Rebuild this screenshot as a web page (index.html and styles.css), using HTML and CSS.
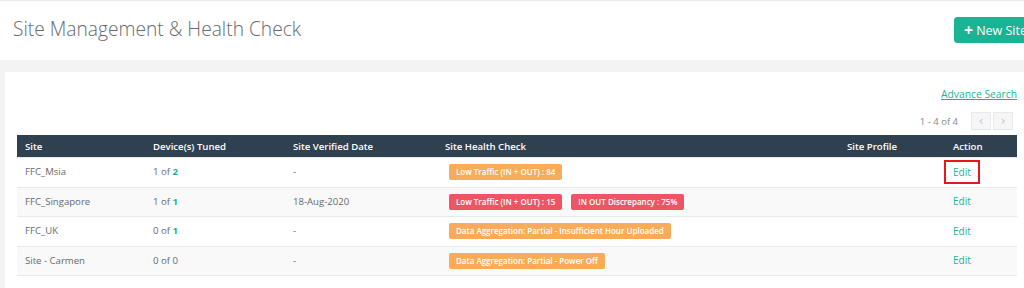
FILE: index.html
```html
<!DOCTYPE html>
<html>
<head>
    <title>Site Management &amp; Health Check</title>
    <link rel="stylesheet" href="styles.css">
</head>
<body>
    <div class="page">
        <div class="page-heading">
            <h2>Site Management &amp; Health Check</h2>
            <button class="btn-new"><span class="plus">+</span>New Site</button>
        </div>

        <div class="wrapper">
            <div class="ibox">
                <div class="toolbar">
                    <a href="#" class="adv-search">Advance Search</a>
                </div>
                <div class="pager">
                    <span class="pager-info">1 - 4 of 4</span>
                    <button class="pager-btn">&#8249;</button>
                    <button class="pager-btn">&#8250;</button>
                </div>

                <table class="site-table">
                    <colgroup>
                        <col style="width: 128px">
                        <col style="width: 140px">
                        <col style="width: 152px">
                        <col style="width: 402px">
                        <col style="width: 106px">
                        <col style="width: 72px">
                    </colgroup>
                    <thead>
                        <tr>
                            <th>Site</th>
                            <th>Device(s) Tuned</th>
                            <th>Site Verified Date</th>
                            <th>Site Health Check</th>
                            <th>Site Profile</th>
                            <th>Action</th>
                        </tr>
                    </thead>
                    <tbody>
                        <tr>
                            <td>FFC_Msia</td>
                            <td>1 of <b class="num">2</b></td>
                            <td>-</td>
                            <td><span class="badge warn">Low Traffic (IN + OUT) : 84</span></td>
                            <td></td>
                            <td><a href="#" class="edit boxed">Edit</a></td>
                        </tr>
                        <tr>
                            <td>FFC_Singapore</td>
                            <td>1 of <b class="num">1</b></td>
                            <td>18-Aug-2020</td>
                            <td><span class="badge danger">Low Traffic (IN + OUT) : 15</span><span class="badge danger">IN OUT Discrepancy : 75%</span></td>
                            <td></td>
                            <td><a href="#" class="edit">Edit</a></td>
                        </tr>
                        <tr>
                            <td>FFC_UK</td>
                            <td>0 of <b class="num">1</b></td>
                            <td>-</td>
                            <td><span class="badge warn">Data Aggregation: Partial - Insufficient Hour Uploaded</span></td>
                            <td></td>
                            <td><a href="#" class="edit">Edit</a></td>
                        </tr>
                        <tr>
                            <td>Site - Carmen</td>
                            <td>0 of 0</td>
                            <td>-</td>
                            <td><span class="badge warn">Data Aggregation: Partial - Power Off</span></td>
                            <td></td>
                            <td><a href="#" class="edit">Edit</a></td>
                        </tr>
                    </tbody>
                </table>
            </div>
        </div>
    </div>
</body>
</html>
```

FILE: styles.css
```css
html, body {
    margin: 0;
    padding: 0;
    overflow: hidden;
}
body {
    background: #f3f3f4;
    font-family: "Open Sans", "Liberation Sans", sans-serif;
    color: #676a6c;
}
.page {
    width: 1040px;
}
.page-heading {
    background: #fff;
    border-top: 1px solid #e7eaec;
    height: 59px;
    display: flex;
    align-items: flex-start;
    justify-content: space-between;
    padding-left: 13px;
}
.page-heading h2 {
    margin: 0;
    padding-top: 14px;
    font-size: 19.2px;
    font-weight: 300;
    color: #676a6c;
}
.btn-new {
    margin-top: 16px;
    height: 26px;
    width: 86px;
    background: #1ab394;
    border: 1px solid #1ab394;
    border-radius: 3px;
    color: #fff;
    font-family: "Open Sans", sans-serif;
    font-size: 12.5px;
    padding: 0 0 0 9px;
    text-align: left;
    display: flex;
    align-items: center;
}
.btn-new .plus {
    font-weight: 700;
    font-size: 16px;
    margin-right: 3px;
    line-height: 1;
}
.wrapper {
    padding: 12px 0 0 5px;
}
.ibox {
    background: #fff;
    width: 1012px;
    padding: 12px 7px 14px 12px;
}
.toolbar {
    width: 1000px;
    text-align: right;
    line-height: 16px;
    height: 16px;
    margin-bottom: 12px;
}
.adv-search {
    color: #1ab394;
    font-size: 10.3px;
    text-decoration: underline;
}
.pager {
    width: 996px;
    display: flex;
    justify-content: flex-end;
    align-items: center;
    height: 18px;
    margin-bottom: 5px;
}
.pager-info {
    font-size: 9.5px;
    color: #888;
    margin-right: 11px;
}
.pager-btn {
    width: 20px;
    height: 18px;
    padding: 0;
    margin-left: 2px;
    background: #f6f6f6;
    border: 1px solid #e7eaec;
    color: #c8c8c8;
    font-size: 13px;
    line-height: 14px;
    font-family: "DejaVu Sans", sans-serif;
}
.site-table {
    width: 1000px;
    table-layout: fixed;
    border-collapse: collapse;
    font-size: 9.6px;
}
.site-table th {
    background: #2f4050;
    color: #fff;
    font-weight: 600;
    text-align: left;
    height: 22px;
    padding: 0 8px;
}
.site-table td {
    padding: 0 8px;
    height: 28.5px;
    line-height: 16px;
    vertical-align: middle;
    border-top: 1px solid #e7eaec;
    white-space: nowrap;
    color: #676a6c;
}
.site-table tbody tr:nth-child(even) td {
    background: #f9f9f9;
}
.site-table tbody tr:last-child td {
    border-bottom: 1px solid #e7eaec;
}
.num {
    color: #1ab394;
    font-weight: 700;
}
.badge {
    display: inline-block;
    vertical-align: middle;
    font-size: 8px;
    font-weight: 600;
    color: #fff;
    line-height: 16px;
    padding: 0 7px;
    border-radius: 2px;
    margin-left: 4px;
    margin-right: 5px;
}
.warn {
    background: #f8ac59;
}
.danger {
    background: #ed5565;
}
.edit {
    color: #1ab394;
    text-decoration: none;
    font-size: 10px;
}
.edit.boxed {
    display: inline-block;
    vertical-align: middle;
    line-height: 16px;
    border: 2px solid #e8171e;
    padding: 2px 7px 2px;
    margin-left: -9px;
}
```
